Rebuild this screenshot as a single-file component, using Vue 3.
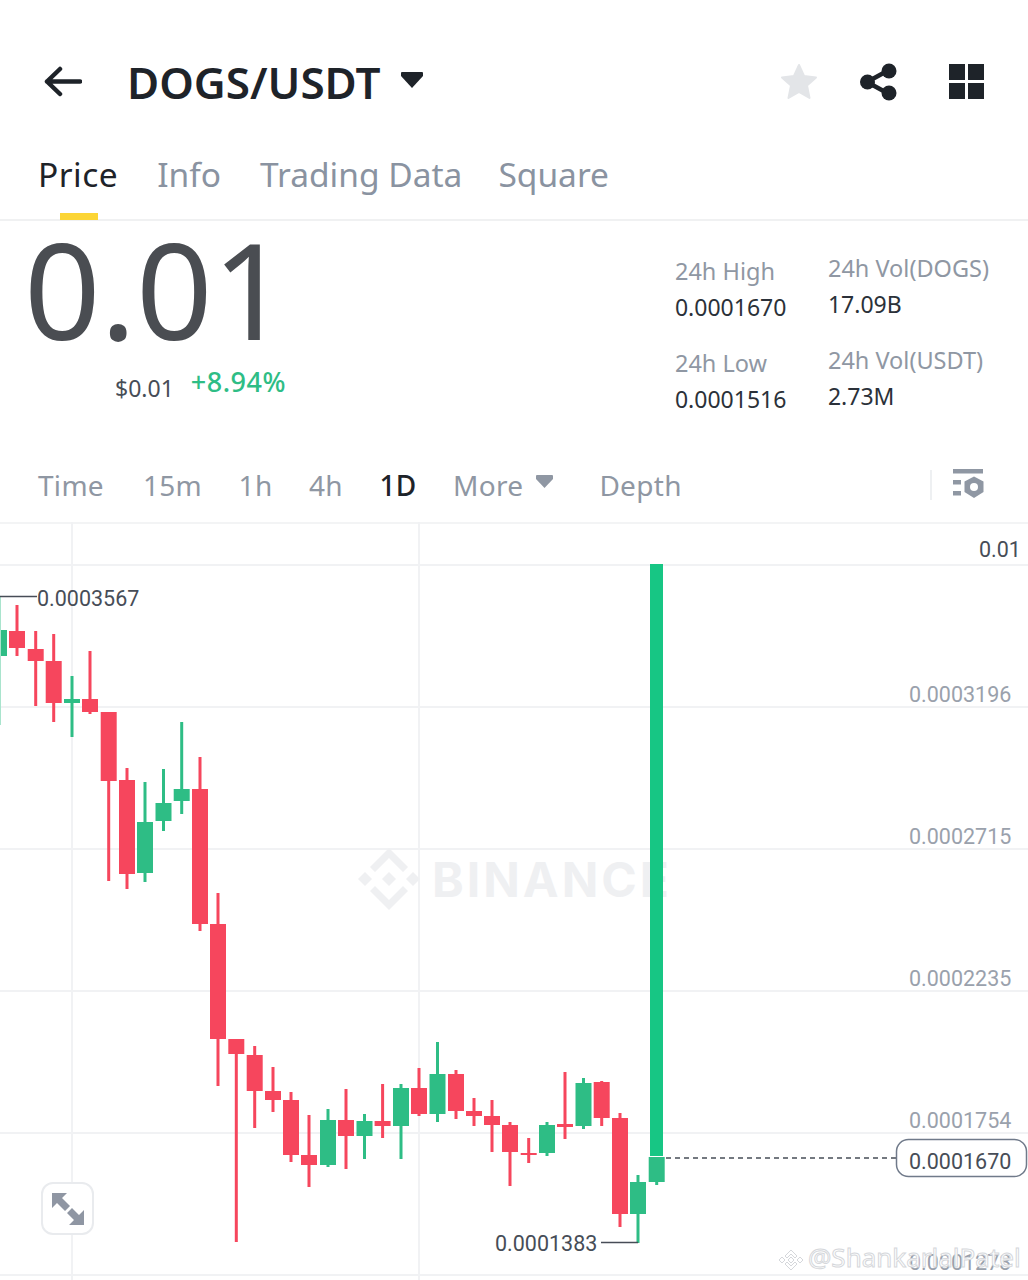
<script setup>
const tabs = ['Price', 'Info', 'Trading Data', 'Square']
const intervals = ['Time', '15m', '1h', '4h', '1D', 'More', 'Depth']

const stats = [
  { label: '24h High', value: '0.0001670' },
  { label: '24h Low', value: '0.0001516' }
]
const volumes = [
  { label: '24h Vol(DOGS)', value: '17.09B' },
  { label: '24h Vol(USDT)', value: '2.73M' }
]

const gridY = [565, 707, 849, 991, 1133, 1275]
const axis = [
  { y: 702, text: '0.0003196' },
  { y: 844, text: '0.0002715' },
  { y: 986, text: '0.0002235' },
  { y: 1128, text: '0.0001754' }
]

// x, wick top, wick bottom, body top, body bottom, up
const candles = [
  [17, 605, 656, 631, 648, 0],
  [35.7, 631, 706, 649, 661, 0],
  [53.7, 634, 722, 661, 703, 0],
  [72, 676, 737, 699, 703, 1],
  [90, 651, 714, 699, 712, 0],
  [108.7, 712, 881, 712, 781, 0],
  [127, 768, 889, 780, 874, 0],
  [145, 782, 882, 822, 873, 1],
  [163.5, 769, 831, 803, 821, 1],
  [181.7, 722, 814, 789, 801, 1],
  [200, 757, 931, 789, 924, 0],
  [218, 893, 1086, 924, 1039, 0],
  [236.3, 1039, 1242, 1039, 1054, 0],
  [254.7, 1046, 1128, 1055, 1091, 0],
  [273, 1067, 1112, 1091, 1100, 0],
  [291, 1092, 1162, 1100, 1155, 0],
  [309, 1115, 1187, 1155, 1165, 0],
  [328, 1109, 1167, 1120, 1165, 1],
  [346, 1089, 1169, 1120, 1136, 0],
  [364.5, 1114, 1159, 1121, 1136, 1],
  [382.6, 1084, 1138, 1121, 1126, 0],
  [401, 1084, 1159, 1088, 1126, 1],
  [419, 1068, 1116, 1088, 1114, 0],
  [437.5, 1042, 1122, 1074, 1114, 1],
  [456, 1070, 1119, 1074, 1111, 0],
  [474, 1098, 1126, 1111, 1116, 0],
  [492, 1100, 1152, 1116, 1125, 0],
  [510, 1122, 1186, 1125, 1152, 0],
  [528.7, 1138, 1163, 1153, 1155, 0],
  [547, 1122, 1156, 1125, 1153, 1],
  [565, 1072, 1139, 1124, 1127, 0],
  [583.5, 1078, 1129, 1083, 1126, 1],
  [601.7, 1081, 1126, 1082, 1118, 0],
  [620, 1113, 1227, 1118, 1214, 0],
  [638, 1175, 1243, 1182, 1214, 1],
  [656.7, 1157, 1185, 1157, 1182, 1]
]

const color = (up) => (up ? '#2ebd85' : '#f6465d')
</script>

<template>
  <div class="page">
    <header class="top">
      <svg class="back" width="40" height="32" viewBox="0 0 40 32">
        <path d="M38 15.500H5M18 3 5 15.500 18 28" fill="none" stroke="#1e2329" stroke-width="4.500" stroke-linecap="round" stroke-linejoin="round" />
      </svg>
      <h1 class="pair">DOGS/USDT</h1>
      <svg class="caret" width="24" height="18" viewBox="0 0 24 18">
        <path d="M2 1h20a1 1 0 0 1 1 1v3L12 17 1 5V2a1 1 0 0 1 1-1z" fill="#1e2329" />
      </svg>
      <div class="actions">
        <svg class="star" width="40" height="40" viewBox="0 0 40 40">
          <path d="M20 3 25 14 37 15.500 28 23.500 30.500 36 20 30 9.500 36 12 23.500 3 15.500 15 14Z" fill="#e3e5e8" stroke="#e3e5e8" stroke-width="2" stroke-linejoin="round" />
        </svg>
        <svg class="share" width="38" height="38" viewBox="0 0 38 38">
          <path d="M29 7 7 19 29 31" fill="none" stroke="#1e2329" stroke-width="4.500" />
          <circle cx="29" cy="8" r="7.500" fill="#1e2329" />
          <circle cx="7.500" cy="19" r="7.500" fill="#1e2329" />
          <circle cx="29" cy="30" r="7.500" fill="#1e2329" />
        </svg>
        <svg class="squares" width="35" height="35" viewBox="0 0 35 35">
          <rect x="0" y="0" width="16" height="16" fill="#1e2329" />
          <rect x="19" y="0" width="16" height="16" fill="#1e2329" />
          <rect x="0" y="19" width="16" height="16" fill="#1e2329" />
          <rect x="19" y="19" width="16" height="16" fill="#1e2329" />
        </svg>
      </div>
    </header>

    <nav class="tabs">
      <span v-for="(tab, i) in tabs" :key="tab" :class="{ tab: true, on: i === 0 }">{{ tab }}</span>
    </nav>

    <section class="summary">
      <div class="price-box">
        <div class="price">0.01</div>
        <div class="sub">
          <span class="usd">$0.01</span>
          <span class="change">+8.94%</span>
        </div>
      </div>
      <div class="stats">
        <div class="col">
          <div v-for="s in stats" :key="s.label" class="stat">
            <span class="label">{{ s.label }}</span>
            <span class="value">{{ s.value }}</span>
          </div>
        </div>
        <div class="col col-vol">
          <div v-for="s in volumes" :key="s.label" class="stat">
            <span class="label">{{ s.label }}</span>
            <span class="value">{{ s.value }}</span>
          </div>
        </div>
      </div>
    </section>

    <div class="intervals">
      <template v-for="item in intervals" :key="item">
        <span :class="['iv', 'iv-' + item, { on: item === '1D' }]">{{ item }}</span>
        <svg v-if="item === 'More'" class="more-caret" width="17" height="13" viewBox="0 0 17 13">
          <path d="M1 0h15a1 1 0 0 1 1 1v3l-8.500 9L0 4V1a1 1 0 0 1 1-1z" fill="#8f97a3" />
        </svg>
      </template>
      <span class="divider"></span>
      <svg class="settings" width="31" height="32" viewBox="0 0 31 32">
        <rect x="0" y="0" width="30" height="4.500" fill="#8f97a3" />
        <rect x="0" y="11" width="8" height="4.500" fill="#8f97a3" />
        <rect x="0" y="22" width="8" height="4.500" fill="#8f97a3" />
        <path d="M21 7.500 30.500 12.500V23L21 29 11.500 23V12.500Z" fill="#8f97a3" />
        <circle cx="21" cy="18" r="4" fill="#fff" />
      </svg>
    </div>

    <div class="chart">
      <svg class="plot" width="1028" height="758" viewBox="0 522 1028 758">
        <g stroke="#f1f2f4" stroke-width="2">
          <line v-for="y in gridY" :key="y" x1="0" :y1="y" x2="1028" :y2="y" />
          <line x1="72" y1="522" x2="72" y2="1280" />
          <line x1="419" y1="522" x2="419" y2="1280" />
        </g>

        <g fill="#eff0f2">
          <path d="M389 848 408 867 403 872 389 858 375 872 370 867Z" />
          <path d="M389 910 408 891 403 886 389 900 375 886 370 891Z" />
          <path d="M389 872 396 879 389 886 382 879Z" />
          <path d="M365 872 372 879 365 886 358 879Z" />
          <path d="M413 872 420 879 413 886 406 879Z" />
          <text x="432" y="897" class="brand">BINANCE</text>
        </g>

        <text v-for="a in axis" :key="a.text" x="909" :y="a.y" class="axis">{{ a.text }}</text>
        <text x="979" y="557" class="tick">0.01</text>

        <rect x="-6" y="630" width="13" height="26" fill="#2ebd85" />
        <line x1="0" y1="597" x2="0" y2="725" stroke="#a9e4cd" stroke-width="2" />

        <g v-for="c in candles" :key="c[0]" :fill="color(c[5])">
          <rect :x="c[0] - 1.500" :y="c[1]" width="3" :height="c[2] - c[1]" />
          <rect :x="c[0] - 8" :y="c[3]" width="16" :height="c[4] - c[3]" />
        </g>
        <rect x="650" y="564" width="13" height="592" fill="#17c684" />

        <path d="M0 596.500H37" stroke="#474d57" stroke-width="1.500" />
        <text x="37" y="606" class="tick">0.0003567</text>
        <path d="M601 1242.500H638" stroke="#474d57" stroke-width="1.500" />
        <text x="495" y="1251" class="tick">0.0001383</text>

        <line x1="666" y1="1158" x2="896" y2="1158" stroke="#474d57" stroke-width="1.500" stroke-dasharray="5 4" />
        <rect x="896.500" y="1139.500" width="130" height="37" rx="12" fill="#fff" stroke="#707a8a" stroke-width="1.500" />
        <text x="909" y="1169" class="tick">0.0001670</text>

        <text x="909" y="1270" class="axis">0.0001273</text>
        <g fill="#fff" stroke="#d5d7db" stroke-width="1">
          <path d="M791 1250 797 1256 795 1258 791 1254 787 1258 785 1256Z" />
          <path d="M791 1270 797 1264 795 1262 791 1266 787 1262 785 1264Z" />
          <path d="M791 1257 794 1260 791 1263 788 1260Z" />
          <path d="M782 1257 785 1260 782 1263 779 1260Z" />
          <path d="M800 1257 803 1260 800 1263 797 1260Z" />
          <text x="808" y="1267" class="mark">@ShankarlalPatel</text>
        </g>
      </svg>

      <button class="expand">
        <svg width="34" height="34" viewBox="0 0 34 34">
          <path d="M1 1H16L11 6 19 14 14 19 6 11 1 16Z" fill="#8f96a3" />
          <path d="M33 33H18L23 28 16 21 21 16 28 23 33 18Z" fill="#8f96a3" />
        </svg>
      </button>
    </div>
  </div>
</template>

<style scoped>
.page {
  position: relative;
  width: 1028px;
  height: 1280px;
  overflow: hidden;
  background: #fff;
  font-family: "Noto Sans", sans-serif;
  color: #1e2329;
}

.top {
  display: flex;
  align-items: center;
  height: 60px;
  padding: 52px 44px 0 42px;
}

.back {
  margin-right: 45px;
}

.pair {
  margin: 0;
  font-size: 44px;
  line-height: 60px;
  font-weight: 600;
  color: #1e2329;
}

.caret {
  margin: -4px 0 0 19px;
}

.actions {
  display: flex;
  align-items: center;
  margin-left: auto;
}

.share {
  margin-left: 41px;
}

.squares {
  margin: -2px 0 0 51px;
}

.tabs {
  display: flex;
  gap: 39px;
  height: 81px;
  margin-top: 28px;
  padding-left: 38px;
  padding-top: 11px;
  box-sizing: border-box;
  border-bottom: 2px solid #f0f1f2;
  position: relative;
}

.tab {
  font-size: 33.500px;
  line-height: 46px;
  color: #8a93a1;
}

.tab:last-child {
  margin-left: -3px;
}

.tab.on {
  color: #1e2329;
  letter-spacing: 0.5px;
  position: relative;
}

.tab.on::after {
  content: "";
  position: absolute;
  left: 22px;
  bottom: -1px;
  width: 38px;
  height: 7px;
  background: #fcd535;
}

.summary {
  display: flex;
  justify-content: space-between;
  height: 226px;
}

.price-box {
  padding-left: 24px;
}

.price {
  font-size: 134px;
  line-height: 136px;
  letter-spacing: -0.3px;
  margin-top: -1px;
  color: #4a4d52;
}

.sub {
  display: flex;
  align-items: flex-start;
  gap: 17px;
  margin: 7px 0 0 91px;
}

.usd {
  font-size: 23px;
  margin-top: 9px;
  color: #474d57;
}

.change {
  font-size: 27px;
  font-weight: 500;
  letter-spacing: 0.5px;
  color: #2ebd85;
}

.stats {
  display: flex;
  padding-top: 33px;
  padding-right: 39px;
}

.col {
  display: flex;
  flex-direction: column;
  gap: 21px;
  width: 153px;
}

.col-vol {
  width: auto;
  margin-top: -3px;
}

.stat {
  display: flex;
  flex-direction: column;
  gap: 1px;
}

.label {
  font-size: 23.500px;
  line-height: 35px;
  color: #8f97a3;
}

.value {
  font-size: 23px;
  line-height: 35px;
  color: #2b3139;
}

.intervals {
  display: flex;
  align-items: center;
  height: 75px;
  padding-left: 38px;
  position: relative;
}

.iv {
  font-size: 28px;
  letter-spacing: 0.3px;
  color: #8f97a3;
  margin-right: 36.500px;
}

.iv-Time {
  margin-right: 39px;
}

.iv.on {
  color: #1e2329;
  font-weight: 500;
}

.iv-More {
  margin-right: 13px;
}

.more-caret {
  margin: -6px 46px 0 0;
}

.divider {
  width: 2px;
  height: 30px;
  background: #eef0f2;
  margin-left: auto;
}

.settings {
  margin: 0 44px 0 21px;
}

.chart {
  position: relative;
  height: 758px;
  border-top: 2px solid #f3f4f5;
  box-sizing: border-box;
}

.plot {
  position: absolute;
  left: 0;
  top: -2px;
  display: block;
}

.brand {
  font-family: Inter, sans-serif;
  font-size: 48px;
  font-weight: 700;
  letter-spacing: 3px;
}

.axis {
  font-family: Roboto, sans-serif;
  font-size: 21.500px;
  fill: #9aa1ac;
}

.tick {
  font-family: Roboto, sans-serif;
  font-size: 21.500px;
  fill: #474d57;
}

.mark {
  font-family: "Noto Sans", sans-serif;
  font-size: 26px;
  stroke-width: 1;
}

.expand {
  position: absolute;
  left: 41px;
  top: 658px;
  width: 53px;
  height: 53px;
  padding: 0;
  display: flex;
  align-items: center;
  justify-content: center;
  background: #fff;
  border: 2px solid #e9ebee;
  border-radius: 12px;
}
</style>
